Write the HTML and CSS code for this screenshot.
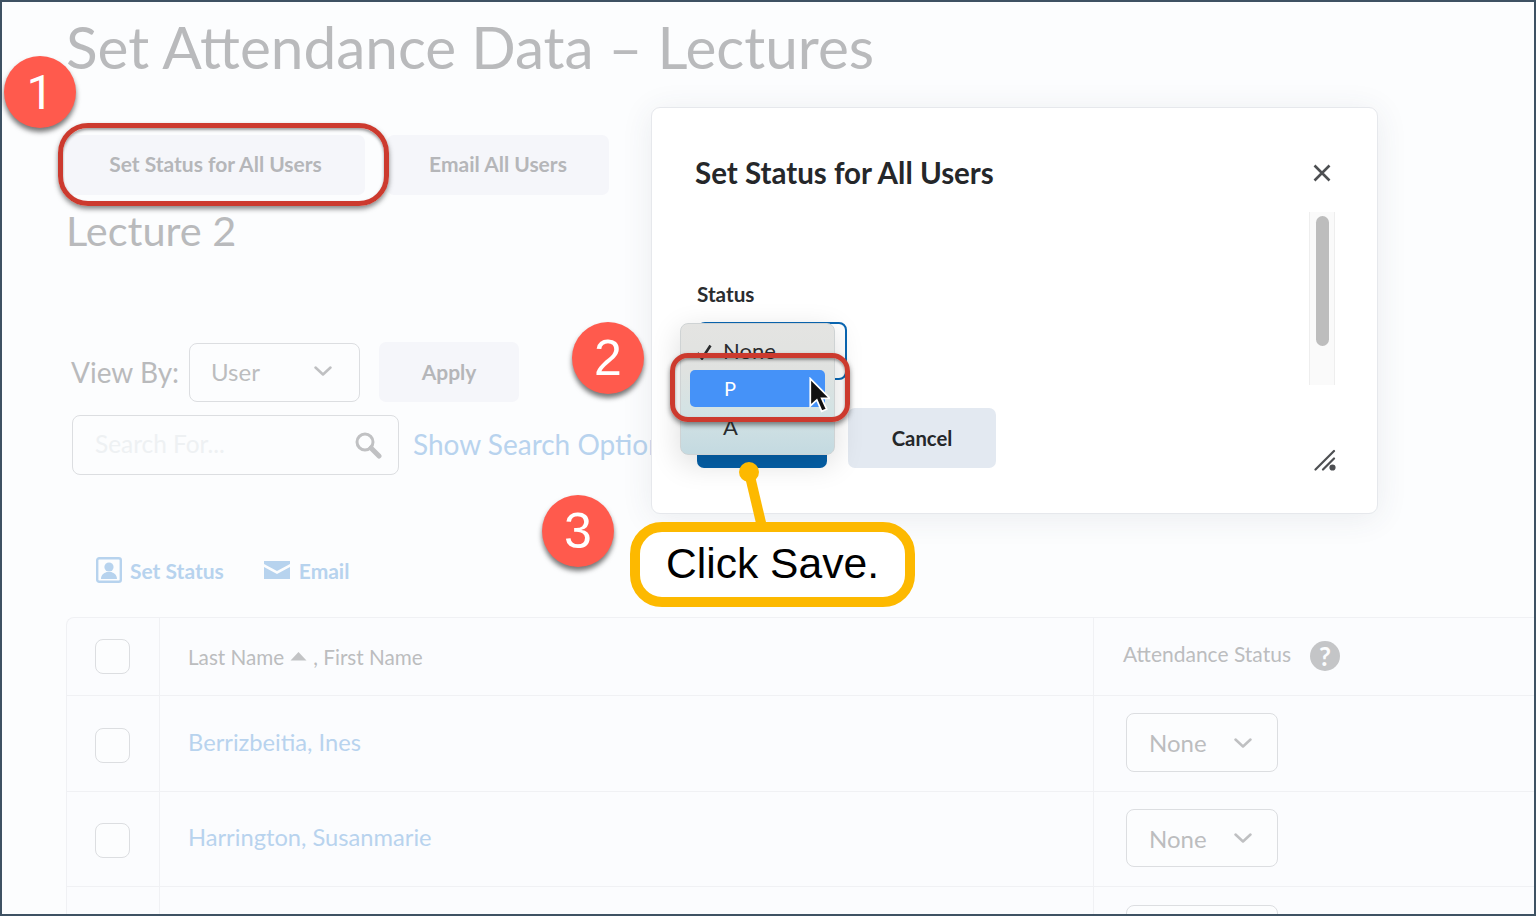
FILE: index.html
```html
<!DOCTYPE html>
<html lang="en">
<head>
<meta charset="utf-8">
<title>Set Attendance Data</title>
<link rel="stylesheet" href="styles.css">
</head>
<body>
<div class="frame">
  <main class="page">
    <h1 class="title">Set Attendance Data – Lectures</h1>
    <div class="btn-row">
      <button class="btn btn-first">Set Status for All Users</button>
      <button class="btn btn-second">Email All Users</button>
    </div>
    <h2 class="subtitle">Lecture 2</h2>
    <div class="view-row">
      <span class="view-label">View By:</span>
      <div class="select select-user"><span>User</span>
        <svg class="chev" viewBox="0 0 18 10"><path d="M1.5 1.5 9 8.5l7.5-7"/></svg>
      </div>
      <button class="btn btn-apply">Apply</button>
    </div>
    <div class="search-row">
      <div class="search"><span class="placeholder">Search For...</span>
        <svg class="search-icon" viewBox="0 0 28 28"><circle cx="11" cy="11" r="8"/><path class="handle" d="M17 17l8 8"/></svg>
      </div>
      <span class="link-lg">Show Search Options</span>
    </div>
    <div class="actions">
      <span class="action">
        <svg class="act-icon" viewBox="0 0 26 26"><rect x="1.2" y="1.2" width="23.6" height="23.6" rx="2" class="act-box"/><circle cx="13" cy="10" r="4.6" class="act-fill"/><path class="act-fill" d="M5 22c0-5 4-6 5.500-7h5c1.500 1 5.500 2 5.500 7z"/></svg>
        Set Status
      </span>
      <span class="action action-email">
        <svg class="act-icon" viewBox="0 0 26 18"><path class="act-fill" d="M0 0h26v3L13 10 0 3z"/><path class="act-fill" d="M0 6l13 7 13-7v12H0z"/></svg>
        Email
      </span>
    </div>
    <div class="table">
      <div class="cell cell-check head"><span class="checkbox"></span></div>
      <div class="cell cell-name head"><span>Last Name</span><svg class="sort" viewBox="0 0 16 9"><path d="M8 0l8 8.500H0z"/></svg><span>, First Name</span></div>
      <div class="cell cell-status head"><span class="status-head">Attendance Status</span>
        <span class="help">?</span></div>

      <div class="cell cell-check row1"><span class="checkbox"></span></div>
      <div class="cell cell-name row1"><span class="name">Berrizbeitia, Ines</span></div>
      <div class="cell cell-status row1"><div class="select select-none"><span>None</span><svg class="chev" viewBox="0 0 18 10"><path d="M1.500 1.500 9 8.500l7.500-7"/></svg></div></div>

      <div class="cell cell-check row2"><span class="checkbox"></span></div>
      <div class="cell cell-name row2"><span class="name">Harrington, Susanmarie</span></div>
      <div class="cell cell-status row2"><div class="select select-none"><span>None</span><svg class="chev" viewBox="0 0 18 10"><path d="M1.500 1.500 9 8.500l7.500-7"/></svg></div></div>

      <div class="cell cell-check row3"></div>
      <div class="cell cell-name row3"></div>
      <div class="cell cell-status row3"><div class="select select-none"></div></div>
    </div>
  </main>

  <section class="dialog">
    <header class="dialog-head">
      <h3 class="dialog-title">Set Status for All Users</h3>
      <svg class="close" viewBox="0 0 18 18"><path d="M1.500 1.500l15 15M16.500 1.500l-15 15"/></svg>
    </header>
    <div class="dialog-body">
      <div class="field">
        <div class="field-label">Status</div>
        <div class="field-select"></div>
        <div class="dialog-btns">
          <button class="save"></button>
          <button class="cancel">Cancel</button>
        </div>
      </div>
      <div class="dialog-side">
        <div class="track"><div class="thumb"></div></div>
        <svg class="resize" viewBox="0 0 22 22"><path d="M1.500 20.500 20 2M9 20.500 20 9.500"/><circle cx="18.500" cy="18.500" r="2"/></svg>
      </div>
    </div>
  </section>

  <div class="menu">
    <div class="menu-item menu-none"><svg class="tick" viewBox="0 0 16 16"><path d="M1.500 9l4.500 5.500L14.500 1.500"/></svg>None</div>
    <div class="menu-item menu-p">P</div>
    <div class="menu-item menu-a">A</div>
  </div>

  <div class="hl hl-one"></div>
  <div class="hl hl-two"></div>
  <svg class="cursor" viewBox="0 0 20 33"><path d="M2 1.500v25l6-5.500 4.500 10.500 4.500-2-4.500-10h7.500z"/></svg>

  <div class="badge badge-1">1</div>
  <div class="badge badge-2">2</div>
  <div class="badge badge-3">3</div>

  <svg class="connector" viewBox="0 0 40 70"><path d="M13 10l13 55"/><circle cx="13" cy="10" r="10"/></svg>
  <div class="callout">Click Save.</div>
</div>
</body>
</html>
```
FILE: styles.css
```css
* { box-sizing: border-box; }
html, body { margin: 0; padding: 0; }
body { width: 1536px; height: 916px; overflow: hidden; font-family: Lato, "Open Sans", sans-serif; }
button { font-family: inherit; border: 0; }

.frame {
  position: relative;
  width: 1536px;
  height: 916px;
  overflow: hidden;
  background: #fcfdfe;
  border: 2px solid #3e5263;
}

.page { padding-left: 64px; color: #b9babc; }

.title {
  margin: 9px 0 0;
  height: 70px;
  font-size: 58.5px;
  line-height: 70px;
  font-weight: 400;
  color: #b9babc;
  white-space: nowrap;
}

.btn-row { display: flex; gap: 22px; margin-top: 54px; }
.btn {
  height: 60px;
  border-radius: 7px;
  background: #f5f6fa;
  color: #b5b6b9;
  font-size: 21px;
  font-weight: 700;
  padding: 0 0 4px;
}
.btn-first { width: 299px; }
.btn-second { width: 222px; }
.btn-apply { padding-bottom: 2px; }

.subtitle {
  margin: 11px 0 0;
  height: 48px;
  font-size: 41.5px;
  line-height: 48px;
  font-weight: 400;
  color: #b9babc;
}

.view-row { display: flex; align-items: center; margin: 88px 0 0 5px; height: 60px; }
.view-label { font-size: 28px; width: 118px; color: #b9babc; }
.select {
  display: flex;
  align-items: center;
  justify-content: space-between;
  background: #fcfdfe;
  border: 1.5px solid #dcdee1;
  border-radius: 8px;
  color: #bcbdbf;
  font-size: 24px;
}
.select-user { width: 171px; height: 59px; padding: 0 27px 2px 21px; }
.chev { width: 18px; height: 10px; fill: none; stroke: #bfc0c2; stroke-width: 2.5; stroke-linecap: round; stroke-linejoin: round; }
.btn-apply { width: 140px; margin-left: 19px; }

.search-row { display: flex; align-items: center; margin: 13px 0 0 6px; height: 60px; }
.search {
  display: flex;
  align-items: center;
  justify-content: space-between;
  width: 327px;
  height: 60px;
  padding: 0 16px 0 22px;
  background: #fcfdfe;
  border: 1.5px solid #dcdee1;
  border-radius: 8px;
}
.placeholder { font-size: 24.4px; margin-bottom: 3px; color: #eef1f3; }
.search-icon { width: 28px; height: 28px; fill: none; stroke: #c0c1c3; stroke-width: 3; }
.handle { stroke-width: 5; stroke-linecap: round; }
.link-lg { margin: 0 0 2px 14px; font-size: 28px; color: #b8d3ee; white-space: nowrap; }

.actions { display: flex; align-items: center; margin: 80px 0 0 30px; height: 30px; color: #b7d3ee; font-size: 21px; font-weight: 700; }
.action { display: flex; align-items: center; gap: 8px; }
.action-email { margin-left: 40px; gap: 9px; }
.act-icon { width: 26px; height: 26px; }
.action-email .act-icon { height: 18px; }
.act-box { fill: none; stroke: #b7d3ee; stroke-width: 2.4; }
.act-fill { fill: #b7d3ee; }

.table {
  display: grid;
  grid-template-columns: 93px 934px 1fr;
  grid-template-rows: 78px 96px 95px 60px;
  margin-top: 32px;
  border: 1px solid #f0f1f4;
  border-right: 0;
  border-bottom: 0;
  border-radius: 8px 0 0 0;
  background: #fbfcfe;
}
.cell { display: flex; align-items: center; border-bottom: 1px solid #f0f1f4; }
.cell-check { justify-content: center; border-right: 1px solid #f0f1f4; padding-right: 1px; }
.cell-check.row1 { padding-top: 4px; }
.cell-check.row2 { padding-top: 2px; }
.cell-name { padding-left: 28px; border-right: 1px solid #f0f1f4; }
.cell-status { padding-left: 32px; }
.checkbox { width: 35px; height: 35px; border: 1.5px solid #dcdee1; border-radius: 8px; background: #fcfdfe; }
.head { font-size: 20.7px; color: #bcbdbf; }
.sort { width: 17px; height: 9px; margin: 0 6px; fill: #c2c3c5; }
.status-head { margin: 0 0 6px -3px; font-size: 21px; }
.help {
  display: flex;
  align-items: center;
  justify-content: center;
  width: 30px;
  height: 30px;
  margin: 0 0 2px 19px;
  border-radius: 50%;
  background: #c4c5c7;
  color: #fcfdfe;
  font-size: 26px;
  font-weight: 700;
}
.name { font-size: 23.7px; margin-bottom: 4px; color: #b8d3ee; }
.select-none { width: 152px; height: 59px; margin-bottom: 2px; padding: 0 25px 0 22px; }
.row2 .select-none { height: 58px; }
.row3 .select-none { align-self: flex-start; margin-top: 18px; }

/* dialog */
.dialog {
  position: absolute;
  left: 649px;
  top: 105px;
  width: 727px;
  height: 407px;
  background: #fff;
  border-radius: 9px;
  border: 1px solid #e6e8ec;
  box-shadow: 0 4px 32px rgba(60, 70, 90, 0.09);
  color: #222;
}
.dialog-head { display: flex; align-items: center; justify-content: space-between; padding: 46px 46px 0 43px; height: 83px; }
.dialog-title { margin: 0; font-size: 29.5px; line-height: 36px; font-weight: 700; color: #25272a; }
.close { width: 18px; height: 18px; fill: none; stroke: #4d4f52; stroke-width: 2.6; }
.dialog-body { display: flex; justify-content: space-between; padding: 0 42px 0 45px; }
.field { width: 400px; padding-top: 90px; }
.field-label { font-size: 20.7px; line-height: 26px; font-weight: 700; color: #2a2c2f; }
.field-select { width: 150px; height: 58px; margin-top: 15px; border: 2px solid #0a66b2; border-radius: 8px; }
.dialog-btns { display: flex; gap: 21px; margin-top: 28px; align-items: flex-end; }
.save { width: 130px; height: 60px; background: #0560a8; border-radius: 7px; }
.cancel { width: 148px; height: 60px; background: #e3e9f1; border-radius: 7px; font-size: 20.3px; font-weight: 700; color: #25272a; }
.dialog-side { display: flex; flex-direction: column; align-items: center; padding-top: 21px; width: 26px; }
.track { width: 26px; height: 173px; padding: 4px 6px 0; background: #fafafa; border-left: 1px solid #eeeeee; border-right: 1px solid #eeeeee; }
.thumb { width: 13px; height: 130px; border-radius: 7px; background: #bdbdbd; }
.resize { width: 22px; height: 22px; margin: 64px 0 0 6px; fill: #4d4f52; stroke: #4d4f52; stroke-width: 2.2; stroke-linecap: round; }

/* native menu */
.menu {
  position: absolute;
  left: 678px;
  top: 321px;
  width: 155px;
  height: 132px;
  border: 1px solid #cfd3d4;
  border-radius: 8px;
  background: linear-gradient(#e4e4e2, #e0e2e0 35%, #d4e3e4 65%, #c4dae1);
  box-shadow: 0 8px 30px rgba(0, 0, 0, 0.14);
  color: #2a2c2e;
  font-size: 20px;
  display: flex;
  flex-direction: column;
  overflow: hidden;
}
.menu-item { display: flex; align-items: center; height: 37px; padding-left: 42px; position: relative; }
.menu-none { margin-top: 6px; font-size: 22px; height: 40px; }
.tick { position: absolute; left: 15px; top: 14px; width: 16px; height: 16px; fill: none; stroke: #2a2c2e; stroke-width: 2.6; }
.menu-p { margin: 0 9px; height: 37px; padding: 0 0 2px 34px; border-radius: 5px; background: #4592f8; color: #fff; }
.menu-a { height: 38px; font-size: 22px; }

/* annotations */
.hl { position: absolute; border: 5px solid #cc3a2e; box-shadow: 0 3px 5px rgba(40, 40, 40, 0.55), inset 0 2px 3px rgba(40, 40, 40, 0.45); }
.hl-one { left: 56px; top: 121px; width: 331px; height: 83px; border-radius: 30px; }
.hl-two { left: 668px; top: 351px; width: 180px; height: 69px; border-radius: 18px; }

.cursor { position: absolute; left: 806px; top: 375px; width: 22px; height: 36px; fill: #111; stroke: #fff; stroke-width: 1.600; }

.badge {
  position: absolute;
  width: 72px;
  height: 72px;
  border-radius: 50%;
  background: #ff5a4d;
  color: #fff;
  display: flex;
  align-items: center;
  justify-content: center;
  font-family: "Liberation Sans", Arial, sans-serif;
  font-size: 50px;
  box-shadow: 0 4px 5px rgba(30, 30, 30, 0.6);
}
.badge-1 { left: 2px; top: 54px; font-family: Roboto, sans-serif; font-size: 48px; }
.badge-2 { left: 570px; top: 320px; }
.badge-3 { left: 540px; top: 493px; }

.connector { position: absolute; left: 734px; top: 460px; width: 40px; height: 70px; fill: #fdb900; stroke: #fdb900; stroke-width: 0; }
.connector path { stroke-width: 10; }

.callout {
  position: absolute;
  left: 628px;
  top: 520px;
  width: 285px;
  height: 85px;
  border: 10px solid #fdb900;
  border-radius: 32px;
  background: #fff;
  color: #000;
  font-family: "Liberation Sans", Arial, sans-serif;
  font-size: 42.6px;
  padding-bottom: 3px;
  display: flex;
  align-items: center;
  justify-content: center;
  white-space: nowrap;
}
```
